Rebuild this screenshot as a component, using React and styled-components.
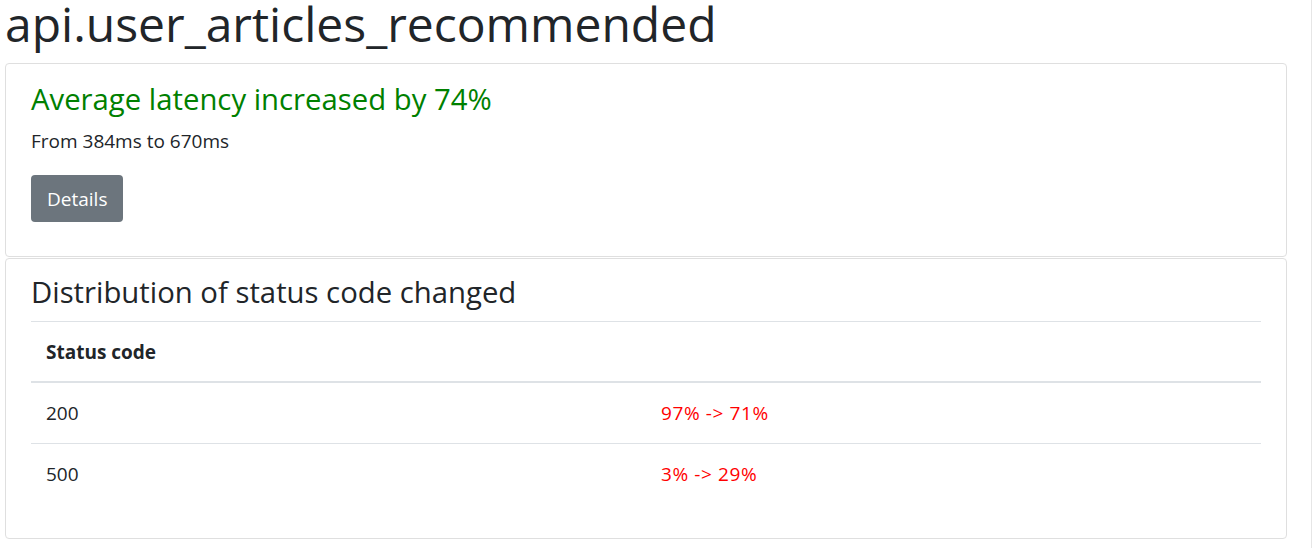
import React from "react";
import styled, { createGlobalStyle } from "styled-components";

const GlobalStyle = createGlobalStyle`
  html, body {
    margin: 0;
    background: #fff;
  }
  body {
    font-family: "Open Sans", "Noto Sans", Arial, sans-serif;
    color: #212529;
  }
`;

const Page = styled.div`
  box-sizing: border-box;
  width: 1312px;
  min-height: 100vh;
  padding: 0 24px 0 5px;
  border-right: 1px solid #e6e6e6;
`;

const Heading = styled.h1`
  margin: 0 0 16px;
  font-size: 48px;
  font-weight: 400;
  line-height: 47px;
`;

const Card = styled.section`
  box-sizing: border-box;
  border: 1px solid #dfdfdf;
  border-radius: 4px;
  padding: ${(p) => p.$pad || "18px 25px 34px"};
  & + & {
    margin-top: 1px;
  }
`;

const CardTitle = styled.h3`
  margin: 0 0 12px;
  font-size: 29.3px;
  font-weight: 500;
  line-height: 34px;
  color: ${(p) => p.$color || "#212529"};
`;

const Text = styled.p`
  margin: 0 0 20px;
  font-size: 19px;
  line-height: 27px;
`;

const Button = styled.button`
  display: inline-block;
  height: 47px;
  padding: 0 16px;
  border: none;
  border-radius: 4px;
  background: #6c757d;
  color: #fff;
  font-family: inherit;
  font-size: 19px;
  cursor: pointer;
`;

const Table = styled.table`
  width: 100%;
  border-collapse: collapse;
  table-layout: fixed;
  font-size: 19px;
`;

const Cell = styled.td`
  padding: 15px 15px;
  height: 30px;
  line-height: 30px;
  border-top: 1px solid #dee2e6;
  color: ${(p) => (p.$change ? "#ff0000" : "#212529")};
  letter-spacing: ${(p) => (p.$change ? "0.6px" : "0")};
`;

const HeadCell = styled.th`
  padding: 15px 15px 14px;
  line-height: 30px;
  text-align: left;
  font-weight: 700;
  border-top: 1px solid #dee2e6;
  border-bottom: 2px solid #dee2e6;
`;

const rows = [
  { code: "200", change: "97% -> 71%" },
  { code: "500", change: "3% -> 29%" },
];

export default function App() {
  return (
    <>
      <GlobalStyle />
      <Page>
        <Heading>api.user_articles_recommended</Heading>
        <Card>
          <CardTitle $color="#008000">Average latency increased by 74%</CardTitle>
          <Text>From 384ms to 670ms</Text>
          <Button>Details</Button>
        </Card>
        <Card $pad="16px 25px 34px">
          <CardTitle>Distribution of status code changed</CardTitle>
          <Table>
            <thead>
              <tr>
                <HeadCell>Status code</HeadCell>
                <HeadCell />
              </tr>
            </thead>
            <tbody>
              {rows.map((r) => (
                <tr key={r.code}>
                  <Cell>{r.code}</Cell>
                  <Cell $change>{r.change}</Cell>
                </tr>
              ))}
            </tbody>
          </Table>
        </Card>
      </Page>
    </>
  );
}
